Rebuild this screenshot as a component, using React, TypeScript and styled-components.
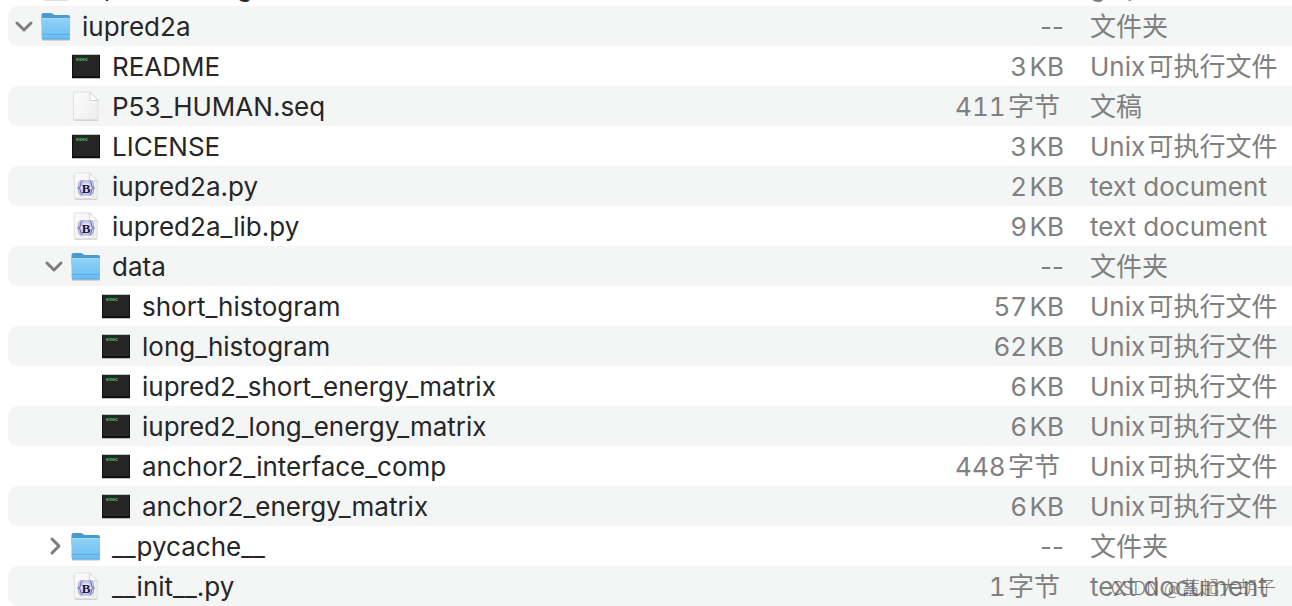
import React from "react";
import styled, { createGlobalStyle } from "styled-components";

const GlobalStyle = createGlobalStyle`
  * { box-sizing: border-box; }
  body { margin: 0; background: #fff; overflow: hidden; }
`;

const Finder = styled.main`
  position: relative;
  padding-left: 8px;
  font-family: Inter, "Noto Sans CJK SC", sans-serif;
  font-size: 26px;
  line-height: 40px;
  color: #262626;
`;

const ClippedRow = styled.div`
  display: flex;
  align-items: flex-end;
  justify-content: space-between;
  height: 6px;
  overflow: hidden;
`;

const ClippedKind = styled.span`
  width: 228px;
  padding: 2px 0 0 26px;
  line-height: 38px;
  white-space: nowrap;
  color: #808080;
`;

const FileTable = styled.table`
  width: 100%;
  table-layout: fixed;
  border-collapse: separate;
  border-spacing: 0;
`;

const NameCol = styled.col``;
const SizeCol = styled.col` width: 160px; `;
const KindCol = styled.col` width: 228px; `;

const Row = styled.tr`
  height: 40px;
  &:nth-child(odd) > td { background: #f4f5f5; }
  & > td:first-child { border-radius: 10px 0 0 10px; }
`;

const Cell = styled.td`
  height: 40px;
  padding: 0;
  white-space: nowrap;
`;

const TextCell = styled(Cell)`
  padding-top: 2px;
  line-height: 38px;
  color: #808080;
`;

const SizeCell = styled(TextCell)<{ $cjk: boolean; $empty: boolean }>`
  text-align: right;
  font-variant-numeric: ${(p) => (p.$empty ? "normal" : "tabular-nums")};
  padding-right: ${(p) => (p.$cjk ? 4 : 0)}px;
`;

const KindCell = styled(TextCell)`
  padding-left: 26px;
`;

const NameBox = styled.div<{ $depth: number }>`
  display: flex;
  align-items: center;
  height: 40px;
  padding-left: ${(p) => p.$depth * 30}px;
`;

const Name = styled.span`
  padding-top: 2px;
  line-height: 38px;
`;

const Toggle = styled.button`
  display: flex;
  width: 32px;
  height: 40px;
  padding: 0;
  border: 0;
  background: none;
  align-items: center;
  justify-content: center;
`;

const ToggleSpace = styled.span`
  width: 32px;
`;

const IconBox = styled.span`
  display: flex;
  width: 32px;
  margin-right: 10px;
  justify-content: center;
`;

const Watermark = styled.span`
  position: absolute;
  right: 16px;
  bottom: 0;
  font-family: "Noto Sans CJK SC", sans-serif;
  font-size: 19px;
  line-height: 38px;
  font-weight: 300;
  color: rgba(90, 90, 90, 0.8);
`;

type IconKind = "folder" | "exec" | "doc" | "bb";

const FolderIcon = () => (
  <svg width="32" height="32" viewBox="0 0 32 32" aria-hidden="true">
    <defs>
      <linearGradient id="folderFront" x1="0" y1="0" x2="0" y2="1">
        <stop offset="0" stopColor="#90d2f8" />
        <stop offset="1" stopColor="#6bbdf0" />
      </linearGradient>
    </defs>
    <path d="M2 30H30" stroke="#000" strokeOpacity=".25" />
    <path d="M1.500 5q0-2 2-2h7q1.500 0 2.500 1t2.500 1h12.500q2 0 2 2v8h-28.500z" fill="#489bd0" />
    <path d="M1.500 10q0-1.500 1.500-1.500h25.500q1.500 0 1.500 1.500v17.500q0 2-2 2h-24.500q-2 0-2-2z" fill="url(#folderFront)" />
    <path d="M2 8.500H29.500" stroke="#a5def9" />
    <path d="M2 24.500H30" stroke="#4ba0d7" strokeOpacity=".6" />
    <path d="M2 29H30" stroke="#4ba0d7" strokeOpacity=".7" />
  </svg>
);

const ExecIcon = () => (
  <svg width="32" height="32" viewBox="0 0 32 32" aria-hidden="true">
    <path d="M2 28.500H30" stroke="#000" strokeOpacity=".25" />
    <rect x="2" y="4" width="28" height="24" fill="#b9c9cd" />
    <rect x="2" y="5" width="28" height="23" fill="#101010" />
    <rect x="3" y="5" width="26" height="21" fill="#262626" />
    <text x="6" y="11" fontFamily="Liberation Mono, monospace" fontWeight="700" fontSize="5" fill="#4fd05c">exec</text>
  </svg>
);

const Sheet = () => (
  <>
    <defs>
      <linearGradient id="sheet" x1="0" y1="0" x2="1" y2="1">
        <stop offset="0" stopColor="#fbfbfb" />
        <stop offset="1" stopColor="#eeeeee" />
      </linearGradient>
    </defs>
    <path d="M4 30h24" stroke="#000" strokeOpacity=".25" />
    <path d="M3.500 3.500q0-1.500 1.500-1.500h14.500l8.500 8.500v17.500q0 1.500-1.500 1.500h-21.500q-1.500 0-1.500-1.500z" fill="url(#sheet)" stroke="#dedede" />
    <path d="M20 2v7q0 1.500 1.500 1.500h6.500z" fill="#fff" stroke="#cfcfcf" />
  </>
);

const DocIcon = () => (
  <svg width="32" height="32" viewBox="0 0 32 32" aria-hidden="true">
    <Sheet />
  </svg>
);

const PyIcon = () => (
  <svg width="30" height="32" viewBox="0 0 32 32" aria-hidden="true">
    <Sheet />
    <path
      d="M12 10q4 1.500 8 0q4 0 4 5l1 3-1 3q0 5-4 5q-4-1.500-8 0q-4 0-4-5l-1-3 1-3q0-5 4-5z"
      fill="#c9c9ec"
      stroke="#a9a9dc"
      strokeWidth="1"
    />
    <path
      d="M12 11q-2 1-2 5l-2 2 2 2q0 4 2 5M20 11q2 1 2 5l2 2-2 2q0 4-2 5"
      fill="none"
      stroke="#7c7cbc"
      strokeWidth="1.200"
    />
    <circle cx="16" cy="18" r="5" fill="#e4e4f6" />
    <text x="16" y="23" textAnchor="middle" fontFamily="Liberation Serif, serif" fontWeight="700" fontSize="14" fill="#17173f">B</text>
  </svg>
);

const icons: Record<IconKind, React.ReactElement> = {
  folder: <FolderIcon />,
  exec: <ExecIcon />,
  doc: <DocIcon />,
  bb: <PyIcon />,
};

const Chevron = ({ open }: { open: boolean }) => (
  <svg width="24" height="24" viewBox="0 0 24 24" fill="none" stroke="#7d7d7d" strokeWidth="3" strokeLinecap="round" strokeLinejoin="round" aria-hidden="true">
    <path d={open ? "M5 9l7 7 7-7" : "M10 5l7 7-7 7"} />
  </svg>
);

interface FileEntry {
  name: string;
  icon: IconKind;
  depth: number;
  size: string;
  kind: string;
  open?: boolean;
}

const UNIX = "Unix\u200a可执行文件";
const TEXT = "text document";

const files: FileEntry[] = [
  { name: "iupred2a", icon: "folder", depth: 0, size: "--", kind: "文件夹", open: true },
  { name: "README", icon: "exec", depth: 1, size: "3 KB", kind: UNIX },
  { name: "P53_HUMAN.seq", icon: "doc", depth: 1, size: "411 字节", kind: "文稿" },
  { name: "LICENSE", icon: "exec", depth: 1, size: "3 KB", kind: UNIX },
  { name: "iupred2a.py", icon: "bb", depth: 1, size: "2 KB", kind: TEXT },
  { name: "iupred2a_lib.py", icon: "bb", depth: 1, size: "9 KB", kind: TEXT },
  { name: "data", icon: "folder", depth: 1, size: "--", kind: "文件夹", open: true },
  { name: "short_histogram", icon: "exec", depth: 2, size: "57 KB", kind: UNIX },
  { name: "long_histogram", icon: "exec", depth: 2, size: "62 KB", kind: UNIX },
  { name: "iupred2_short_energy_matrix", icon: "exec", depth: 2, size: "6 KB", kind: UNIX },
  { name: "iupred2_long_energy_matrix", icon: "exec", depth: 2, size: "6 KB", kind: UNIX },
  { name: "anchor2_interface_comp", icon: "exec", depth: 2, size: "448 字节", kind: UNIX },
  { name: "anchor2_energy_matrix", icon: "exec", depth: 2, size: "6 KB", kind: UNIX },
  { name: "__pycache__", icon: "folder", depth: 1, size: "--", kind: "文件夹", open: false },
  { name: "__init__.py", icon: "bb", depth: 1, size: "1 字节", kind: TEXT },
];

export default function App() {
  return (
    <Finder>
      <GlobalStyle />
      <ClippedRow>
        <NameBox $depth={0}>
          <ToggleSpace />
          <IconBox><DocIcon /></IconBox>
          <Name>iupred2a.tar.gz</Name>
        </NameBox>
        <ClippedKind>gzip</ClippedKind>
      </ClippedRow>
      <FileTable>
        <colgroup>
          <NameCol />
          <SizeCol />
          <KindCol />
        </colgroup>
        <tbody>
          {files.map((f) => (
            <Row key={f.name}>
              <Cell>
                <NameBox $depth={f.depth}>
                  {f.open === undefined ? (
                    <ToggleSpace />
                  ) : (
                    <Toggle aria-label={f.name} aria-expanded={f.open}>
                      <Chevron open={f.open} />
                    </Toggle>
                  )}
                  <IconBox>{icons[f.icon]}</IconBox>
                  <Name>{f.name}</Name>
                </NameBox>
              </Cell>
              <SizeCell $cjk={f.size.includes("字节")} $empty={f.size === "--"}>
                {f.size.replace(" ", "\u200a")}
              </SizeCell>
              <KindCell>{f.kind}</KindCell>
            </Row>
          ))}
        </tbody>
      </FileTable>
      <Watermark>CSDN @蓄起大胡子</Watermark>
    </Finder>
  );
}
